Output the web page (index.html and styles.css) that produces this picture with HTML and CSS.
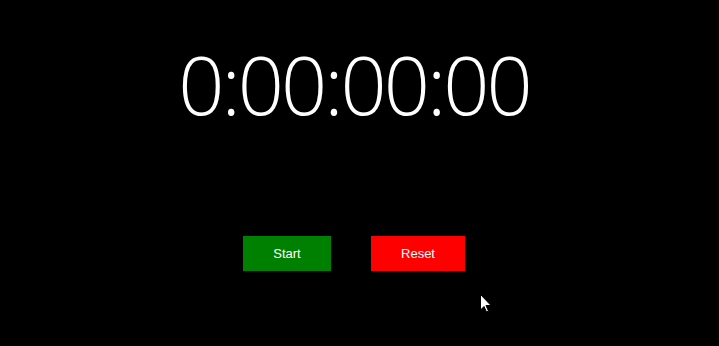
FILE: index.html
```html
<!DOCTYPE html>
<html>
<head>
<meta charset="utf-8">
<link rel="stylesheet" href="styles.css">
</head>
<body>
<main class="app">
  <div class="timer"><span class="timer-text">0:00:00:00</span></div>
  <div class="controls">
    <button class="btn btn-start">Start</button>
    <button class="btn btn-reset">Reset</button>
  </div>
</main>
<svg class="cursor" width="12" height="19" viewBox="0 0 12 19"><path d="M0.5 0.5 L0.5 16 L4 12.5 L6.5 18 L8.5 17 L6 11.5 L11 11.5 Z" fill="#fff" stroke="#000" stroke-width="1"/></svg>
</body>
</html>
```
FILE: styles.css
```css
html, body {
  margin: 0;
  padding: 0;
  background: #000;
  height: 100%;
  overflow: hidden;
}
.app {
  display: flex;
  flex-direction: column;
  align-items: center;
  padding-top: 34px;
  padding-right: 11px;
}
.timer {
  height: 100px;
  display: flex;
  justify-content: center;
}
.timer-text {
  display: inline-block;
  font-family: "Open Sans", sans-serif;
  font-weight: 350;
  font-size: 81px;
  line-height: 100px;
  color: #fff;
  letter-spacing: -3px;
}
.controls {
  margin-top: 102px;
  display: flex;
  gap: 40px;
}
.btn {
  font-family: "Liberation Sans", Arial, sans-serif;
  font-size: 13px;
  color: #fff;
  border: none;
  height: 35px;
  padding: 0 30px;
  margin: 0;
}
.btn-start { background: #008000; width: 88px; }
.btn-reset { background: #ff0000; width: 94px; }
.cursor {
  position: absolute;
  left: 480px;
  top: 294px;
}
```
